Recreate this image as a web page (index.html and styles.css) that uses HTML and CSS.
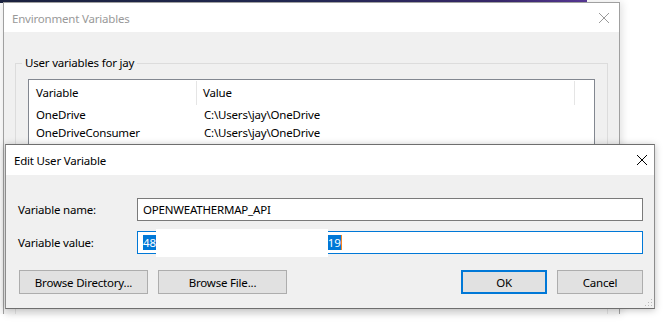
FILE: index.html
```html
<!DOCTYPE html>
<html>
<head>
<meta charset="utf-8">
<link rel="stylesheet" href="styles.css">
</head>
<body>
<div class="desktop">
  <div class="wallpaper"></div>
  <div class="backwin"></div>

  <div class="window envwin">
    <div class="titlebar env-title">
      <span class="title">Environment Variables</span>
      <svg class="close" width="12" height="12" viewBox="0 0 12 12"><path d="M1 1L11 11M11 1L1 11" stroke="#9a9a9a" stroke-width="1" fill="none"/></svg>
    </div>
    <div class="envbody">
      <fieldset class="group">
        <legend>User variables for jay</legend>
        <div class="listview">
          <div class="lv-head">
            <div class="c1">Variable</div>
            <div class="c2">Value</div>
            <div class="c3"></div>
          </div>
          <div class="lv-row"><div class="c1">OneDrive</div><div class="c2">C:\Users\jay\OneDrive</div></div>
          <div class="lv-row"><div class="c1">OneDriveConsumer</div><div class="c2">C:\Users\jay\OneDrive</div></div>
        </div>
      </fieldset>
    </div>
  </div>

  <div class="window editdlg">
    <div class="titlebar edit-title">
      <span class="title">Edit User Variable</span>
      <svg class="close" width="12" height="12" viewBox="0 0 12 12"><path d="M1 1L11 11M11 1L1 11" stroke="#000" stroke-width="1" fill="none"/></svg>
    </div>
    <div class="editbody">
      <div class="form">
        <label class="lbl">Variable name:</label>
        <div class="input">OPENWEATHERMAP_API</div>
        <label class="lbl">Variable value:</label>
        <div class="input focused"><span class="sel">48</span><span class="redact"></span><span class="sel">19</span><span class="caret"></span></div>
      </div>
      <div class="buttons">
        <button class="btn wide">Browse Directory...</button>
        <button class="btn wide">Browse File...</button>
        <span class="spacer"></span>
        <button class="btn def">OK</button>
        <button class="btn">Cancel</button>
      </div>
    </div>
    <svg class="grip" width="8" height="8" viewBox="0 0 8 8">
      <rect x="6" y="0" width="1" height="1" fill="#b8b8b8"/>
      <rect x="3" y="3" width="1" height="1" fill="#b8b8b8"/>
      <rect x="6" y="3" width="1" height="1" fill="#b8b8b8"/>
      <rect x="0" y="6" width="1" height="1" fill="#b8b8b8"/>
      <rect x="3" y="6" width="1" height="1" fill="#b8b8b8"/>
      <rect x="6" y="6" width="1" height="1" fill="#b8b8b8"/>
    </svg>
  </div>
</div>
</body>
</html>
```

FILE: styles.css
```css
* { box-sizing: border-box; }
html, body { margin: 0; padding: 0; }
body {
  width: 665px;
  height: 326px;
  overflow: hidden;
  background: #ffffff;
  font-family: "Noto Sans", "Open Sans", sans-serif;
  font-size: 11.5px;
  letter-spacing: -0.2px;
  color: #000;
}
.desktop {
  position: relative;
  width: 665px;
  height: 326px;
  overflow: hidden;
}
.wallpaper {
  position: absolute;
  left: 0;
  top: 0;
  width: 587px;
  height: 3px;
  background: linear-gradient(90deg, #1d2442 0%, #232a55 50%, #3a2a6e 85%, #5a3a9a 100%);
}
.backwin {
  position: absolute;
  left: 0;
  top: 3px;
  width: 3px;
  height: 311px;
  background: #fafafa;
}
.window {
  position: absolute;
  display: flex;
  flex-direction: column;
}
.envwin {
  left: 3px;
  top: 2px;
  width: 617px;
  height: 312px;
  border: 1px solid #a0a0a0;
  border-bottom: none;
  background: #f0f0f0;
  box-shadow: 2px 0 8px rgba(0,0,0,0.12);
  overflow: hidden;
}
.titlebar {
  background: #fff;
  display: flex;
  align-items: center;
  flex: none;
}
.env-title {
  height: 29px;
  padding-left: 8px;
  padding-right: 9px;
}
.env-title .title { color: #999; padding-top: 1px; }
.titlebar .title { flex: 1; white-space: nowrap; }
.envbody {
  flex: 1;
  padding: 23px 11px 0 11px;
  background: #f0f0f0;
}
.group {
  margin: 0;
  padding: 8px 12px 0 12px;
  border: 1px solid #dcdcdc;
  height: 300px;
  min-width: 0;
}
.group legend {
  margin-left: -6px;
  padding: 0 3px;
  line-height: 16px;
}
.listview {
  background: #fff;
  border: 1px solid #828790;
  height: 218px;
}
.lv-head {
  display: flex;
  height: 26px;
  align-items: center;
}
.lv-head .c1 {
  width: 168px;
  padding-left: 7px;
  height: 24px;
  line-height: 24px;
  border-right: 1px solid #e5e5e5;
  flex: none;
}
.lv-head .c2 {
  width: 378px;
  padding-left: 6px;
  height: 24px;
  line-height: 24px;
  border-right: 1px solid #e5e5e5;
  flex: none;
}
.lv-row {
  display: flex;
  height: 18px;
  line-height: 18px;
}
.lv-row .c1 { width: 169px; padding-left: 7px; flex: none; }
.lv-row .c2 { padding-left: 6px; }

.editdlg {
  left: 5px;
  top: 144px;
  width: 650px;
  height: 165px;
  border: 1px solid #8c8c8c;
  border-top-color: #6e6e6e;
  border-bottom-color: #6e6e6e;
  background: #f0f0f0;
  box-shadow: 0 1px 7px rgba(0,0,0,0.25);
}
.edit-title {
  height: 30px;
  padding-left: 8px;
  padding-right: 6px;
}
.editbody {
  flex: 1;
  padding: 23px 11px 0 12px;
}
.form {
  display: grid;
  grid-template-columns: 119px 506px;
  row-gap: 10px;
  align-items: center;
}
.lbl { white-space: nowrap; }
.input {
  height: 23px;
  border: 1px solid #7a7a7a;
  background: #fff;
  display: flex;
  align-items: center;
  padding-left: 5px;
  white-space: nowrap;
}
.input.focused { border-color: #0078d7; }
.sel {
  background: #0078d7;
  color: #fff;
  line-height: 15px;
}
.redact {
  display: inline-block;
  width: 172px;
  height: 28px;
  background: #fff;
  flex: none;
}
.caret {
  display: inline-block;
  width: 1px;
  height: 15px;
  background: #f5841f;
}
.buttons {
  display: flex;
  margin-top: 16px;
  margin-left: 1px;
  gap: 10px;
}
.spacer { flex: 1; }
.btn {
  font-family: inherit;
  font-size: 11.5px;
  letter-spacing: -0.2px;
  color: #000;
  height: 24px;
  width: 86px;
  background: #e1e1e1;
  border: 1px solid #adadad;
  padding: 0;
  margin: 0;
}
.btn.wide { width: 129px; }
.btn.def { border: 2px solid #0078d7; }
.grip {
  position: absolute;
  right: 1px;
  bottom: 1px;
}
```
